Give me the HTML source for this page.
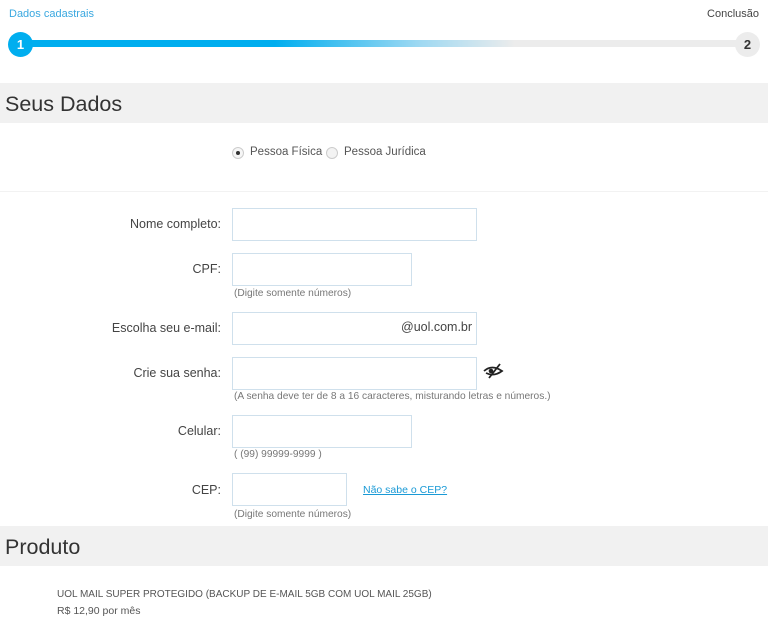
<!DOCTYPE html>
<html><head><meta charset="utf-8"><style>
*{box-sizing:border-box;margin:0;padding:0}
body{width:768px;height:629px;overflow:hidden;background:#fff;font-family:"Liberation Sans",sans-serif;color:#555;position:relative}
.a{position:absolute}
.lbl{position:absolute;right:547px;font-size:12.5px;color:#444;text-align:right;white-space:nowrap}
.inp{position:absolute;left:232px;border:1px solid #cfe0ec;height:33px;background:#fff}
.hint{position:absolute;left:234px;font-size:10.2px;color:#777}
.band{position:absolute;left:0;width:768px;height:40px;background:#f1f1f1;font-size:21.5px;color:#333;padding:9px 0 0 5px}
</style></head><body>
<div class="a" style="left:9px;top:8px;font-size:11px;color:#3aa8e0">Dados cadastrais</div>
<div class="a" style="right:9px;top:8px;font-size:11px;color:#444">Conclusão</div>
<div class="a" style="left:20px;top:40px;width:728px;height:7px;background:linear-gradient(90deg,#00aeef 0%,#00aeef 35%,#9fd9f2 55%,#ececec 68%,#ececec 100%)"></div>
<div class="a" style="left:8px;top:32px;width:25px;height:25px;border-radius:50%;background:#00aeef;color:#fff;font-weight:bold;font-size:13px;text-align:center;line-height:25px">1</div>
<div class="a" style="left:735px;top:32px;width:25px;height:25px;border-radius:50%;background:#ececec;color:#333;font-weight:bold;font-size:13px;text-align:center;line-height:25px">2</div>
<div class="band" style="top:83px">Seus Dados</div>
<div class="a" style="left:232px;top:147px;width:12px;height:12px;border-radius:50%;border:1px solid #ccc;background:#f6f6f6"></div>
<div class="a" style="left:236px;top:151px;width:4px;height:4px;border-radius:50%;background:#333"></div>
<div class="a" style="left:250px;top:146px;font-size:11.5px;color:#555">Pessoa Física</div>
<div class="a" style="left:326px;top:147px;width:12px;height:12px;border-radius:50%;border:1px solid #ccc;background:#f3f3f3"></div>
<div class="a" style="left:344px;top:146px;font-size:11.5px;color:#555">Pessoa Jurídica</div>
<div class="a" style="left:0;top:191px;width:768px;height:1px;background:#f2f2f2"></div>

<div class="lbl" style="top:217px">Nome completo:</div><div class="inp" style="top:208px;width:245px"></div>
<div class="lbl" style="top:262px">CPF:</div><div class="inp" style="top:253px;width:180px"></div>
<div class="hint" style="top:288px">(Digite somente números)</div>
<div class="lbl" style="top:321px">Escolha seu e-mail:</div><div class="inp" style="top:312px;width:245px"></div>
<div class="a" style="left:401px;top:320px;font-size:12.5px;color:#444">@uol.com.br</div>
<div class="lbl" style="top:366px">Crie sua senha:</div><div class="inp" style="top:357px;width:245px"></div>
<svg class="a" style="left:482px;top:362px" width="22" height="18" viewBox="0 0 22 18"><path d="M2 9 Q10 2 20 9 Q12 15 4 11" fill="none" stroke="#222" stroke-width="1.8"/><path d="M7 16 L18 2" stroke="#222" stroke-width="1.8"/><circle cx="9" cy="9" r="2.3" fill="#222"/></svg>
<div class="hint" style="top:391px">(A senha deve ter de 8 a 16 caracteres, misturando letras e números.)</div>
<div class="lbl" style="top:424px">Celular:</div><div class="inp" style="top:415px;width:180px"></div>
<div class="hint" style="top:449px">( (99) 99999-9999 )</div>
<div class="lbl" style="top:483px">CEP:</div><div class="inp" style="top:473px;width:115px"></div>
<div class="a" style="left:363px;top:484px;font-size:10.5px;color:#1a9ad6;text-decoration:underline">Não sabe o CEP?</div>
<div class="hint" style="top:509px">(Digite somente números)</div>
<div class="band" style="top:526px">Produto</div>
<div class="a" style="left:57px;top:589px;font-size:10px;color:#555">UOL MAIL SUPER PROTEGIDO (BACKUP DE E-MAIL 5GB COM UOL MAIL 25GB)</div>
<div class="a" style="left:57px;top:605px;font-size:10.5px;color:#555">R$ 12,90 por mês</div>
</body></html>
